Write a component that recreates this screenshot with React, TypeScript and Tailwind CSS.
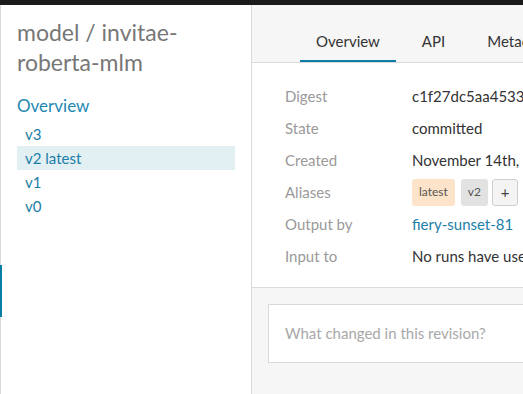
import React from "react";

const rows: { label: string; value: React.ReactNode }[] = [
  { label: "Digest", value: "c1f27dc5aa45336b2e0f9a1d7c" },
  { label: "State", value: "committed" },
  { label: "Created", value: "November 14th, 2021 10:32:11" },
  {
    label: "Aliases",
    value: (
      <div className="flex items-center gap-[6px]">
        <span className="h-[27px] px-[7px] flex items-center rounded-[3px] bg-[#fde3c9] text-[12px] text-[#555]">latest</span>
        <span className="h-[27px] px-[7px] flex items-center rounded-[3px] bg-[#e2e2e2] text-[12px] text-[#555]">v2</span>
        <span className="h-[27px] w-[26px] -ml-[2px] flex items-center justify-center rounded-[3px] border border-[#cfcfcf] bg-[#f4f4f4] text-[15px] text-[#444]">+</span>
      </div>
    ),
  },
  { label: "Output by", value: <span className="text-[#1b80a9]">fiery-sunset-81</span> },
  { label: "Input to", value: "No runs have used this artifact" },
];

const versions = ["v3", "v2 latest", "v1", "v0"];

export default function App() {
  return (
    <div
      className="w-[523px] h-[394px] overflow-hidden flex flex-col bg-white"
      style={{ fontFamily: "Lato, 'Noto Sans', sans-serif" }}
    >
      <div className="h-[5px] shrink-0 bg-[#1b1b1b]" />
      <div className="flex flex-1 min-h-0">
        {/* sidebar */}
        <aside className="relative w-[252px] shrink-0 bg-white border-l border-r border-[#dadada] pl-[16px] pr-[16px]">
          <div className="absolute left-[-1px] top-[260px] w-[2px] h-[52px] bg-[#0b7ea7]" />
          <h1 className="mt-[12px] text-[23px] leading-[30px] text-[#777]">model / invitae-roberta-mlm</h1>
          <div className="mt-[18px] text-[17px] leading-[22px] text-[#1e88b2]">Overview</div>
          <ul className="mt-[5px]">
            {versions.map((v) => (
              <li
                key={v}
                className={`h-[24px] pl-[8px] flex items-center text-[15px] text-[#1a7ea8] ${
                  v === "v2 latest" ? "bg-[#e2eff3]" : ""
                }`}
              >
                {v}
              </li>
            ))}
          </ul>
        </aside>

        {/* main */}
        <main className="w-[620px] shrink-0 flex flex-col bg-[#f6f6f6]">
          <div className="h-[58px] shrink-0 border-b border-[#dadada] flex items-end pl-[48px] gap-[10px]">
            {["Overview", "API", "Metadata", "Files", "Graph view"].map((t, i) => (
              <div
                key={t}
                className={`h-[57px] px-[16px] flex items-center text-[15px] text-[#333] border-b-2 ${
                  i === 0 ? "border-[#0f7da5]" : "border-transparent"
                }`}
              >
                <span className="pt-[17px]">{t}</span>
              </div>
            ))}
          </div>
          <div className="bg-white border-b border-[#dadada] pt-[17px] pb-[15px] pl-[33px]">
            {rows.map((r) => (
              <div key={r.label} className="h-[32px] flex items-center text-[15px]">
                <div className="w-[127px] text-[#9a9a9a]">{r.label}</div>
                <div className="text-[#333]">{r.value}</div>
              </div>
            ))}
          </div>
          <div className="p-[16px]">
            <div className="h-[59px] bg-white border border-[#d9d9d9] flex items-center px-[16px] text-[15px] text-[#a8a8a8]">
              What changed in this revision?
            </div>
          </div>
        </main>
      </div>
    </div>
  );
}
